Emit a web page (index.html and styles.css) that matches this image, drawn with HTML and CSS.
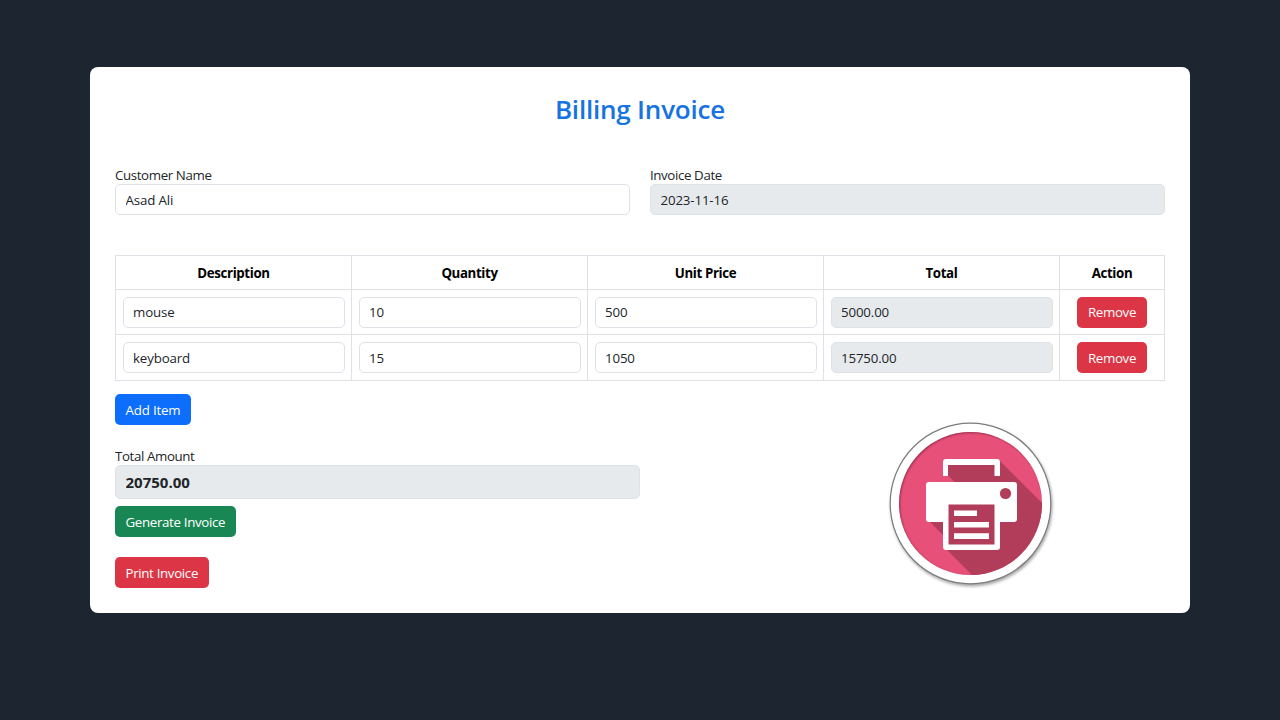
FILE: index.html
```html
<!DOCTYPE html>
<html lang="en">
  <head>
    <meta charset="utf-8" />
    <title>Billing Invoice</title>
    <link rel="stylesheet" href="styles.css">
  </head>

  <body>
    <div class="container">
      <h2>Billing Invoice</h2>

      <div class="details">
        <div class="form-group">
          <label for="customerName">Customer Name</label>
          <input type="text" class="form-control" id="customerName" value="Asad Ali">
        </div>
        <div class="form-group">
          <label for="invoiceDate">Invoice Date</label>
          <input type="text" class="form-control" id="invoiceDate" value="2023-11-16" readonly>
        </div>
      </div>

      <table class="table">
        <thead>
          <tr>
            <th>Description</th>
            <th>Quantity</th>
            <th>Unit Price</th>
            <th>Total</th>
            <th class="action">Action</th>
          </tr>
        </thead>
        <tbody>
          <tr>
            <td><input type="text" class="form-control" value="mouse"></td>
            <td><input type="text" class="form-control" value="10"></td>
            <td><input type="text" class="form-control" value="500"></td>
            <td><input type="text" class="form-control" value="5000.00" readonly></td>
            <td><button type="button" class="btn btn-danger">Remove</button></td>
          </tr>
          <tr>
            <td><input type="text" class="form-control" value="keyboard"></td>
            <td><input type="text" class="form-control" value="15"></td>
            <td><input type="text" class="form-control" value="1050"></td>
            <td><input type="text" class="form-control" value="15750.00" readonly></td>
            <td><button type="button" class="btn btn-danger">Remove</button></td>
          </tr>
        </tbody>
      </table>

      <div class="footer">
        <div class="summary">
          <button type="button" class="btn btn-primary">Add Item</button>
          <div class="form-group total">
            <label for="totalAmount">Total Amount</label>
            <input type="text" class="form-control" id="totalAmount" value="20750.00" readonly>
          </div>
          <button type="button" class="btn btn-success">Generate Invoice</button>
          <button type="button" class="btn btn-danger print">Print Invoice</button>
        </div>

        <svg class="printer" width="170" height="170" viewBox="5 4 170 170">
          <defs>
            <clipPath id="disc"><circle cx="90.5" cy="88.5" r="71.5" /></clipPath>
          </defs>
          <circle class="ring" cx="90.5" cy="88.5" r="80.3" />
          <circle cx="90.5" cy="88.5" r="71.5" fill="#e75078" />
          <g clip-path="url(#disc)">
            <path d="M119 45 L180 106 V180 H112 L63 131 V120 L49 106 L68 67 H74.500 L65 57.500 L68 50 Z" fill="#b13d5a" />
            <circle class="inner" cx="91.5" cy="89.5" r="73" />
          </g>
          <path d="M63 61 V47 Q63 44 66 44 H117 Q120 44 120 47 V61 H114.500 V50 H68 V61 Z" fill="#fff" />
          <path d="M49 67 H134 Q137 67 137 70 V104 Q137 107 134 107 H120 V132 Q120 135 117 135 H66 Q63 135 63 132 V107 H49 Q46 107 46 104 V70 Q46 67 49 67 Z" fill="#fff" />
          <circle cx="125.500" cy="78.500" r="5.600" fill="#b13d5a" />
          <path d="M68.500 89.500 H114.500 V129.500 H68.500 Z" fill="#b13d5a" />
          <path d="M74 95.500 H97 V101 H74 Z M74 107 H109 V112.500 H74 Z M74 118.300 H109 V124 H74 Z" fill="#fff" />
        </svg>
      </div>
    </div>
  </body>
</html>
```

FILE: styles.css
```css
* {
  box-sizing: border-box;
}

body {
  margin: 0;
  min-height: 720px;
  padding: 67px 90px 0;
  background-color: #1d2530;
  color: #212529;
  font-family: "Open Sans", "Noto Sans", sans-serif;
  font-size: 13.3px;
  line-height: 20px;
  letter-spacing: -0.38px;
}

.container {
  height: 546px;
  padding: 25px;
  background-color: #fff;
  border-radius: 8px;
}

h2 {
  margin: 0 0 40px;
  color: #1673e0;
  font-size: 26px;
  font-weight: 600;
  line-height: 34px;
  text-align: center;
  letter-spacing: -0.2px;
}

.details {
  display: grid;
  grid-template-columns: 1fr 1fr;
  gap: 20px;
  margin-bottom: 40px;
}

label {
  display: block;
  height: 18px;
  line-height: 18px;
}

.form-control {
  display: block;
  width: 100%;
  height: 31px;
  padding: 0 9.5px;
  border: 1px solid #dee2e6;
  border-radius: 5px;
  background-color: #fff;
  color: #212529;
  font: inherit;
  letter-spacing: -0.15px;
}

.form-control[readonly] {
  background-color: #e7eaed;
}

.table {
  width: 1050px;
  margin-bottom: 13px;
  border-collapse: collapse;
  table-layout: fixed;
}

.table th,
.table td {
  padding: 6.5px;
  border: 1px solid #dee2e6;
  text-align: center;
}

.table th {
  height: 34px;
  color: #000;
  font-weight: 700;
}

.table td {
  height: 45px;
}

.table tr:last-child td {
  height: 46px;
}

.table .action {
  width: 105px;
}

.btn {
  display: block;
  height: 31px;
  padding: 0 10.5px;
  border: 0;
  border-radius: 5px;
  color: #fff;
  font: inherit;
  letter-spacing: -0.33px;
}

.table .btn {
  margin: 0 auto;
}

.btn-primary {
  background-color: #0d6efd;
  letter-spacing: -0.18px;
}

.btn-success {
  background-color: #198754;
}

.btn-danger {
  background-color: #dc3545;
}

.footer {
  display: flex;
}

.summary {
  width: 525px;
}

.total {
  margin: 22px 0 7px;
}

.total .form-control {
  height: 34px;
  font-size: 15px;
  font-weight: 700;
  letter-spacing: 0;
}

.print {
  margin-top: 20px;
}

.printer {
  margin: 25px 0 0 245px;
}

.ring {
  fill: #fff;
  stroke: #7c7c7c;
  stroke-width: 1.2;
  filter: drop-shadow(1px 2px 1.5px rgba(0, 0, 0, 0.35));
}

/* shading along the upper left edge of the disc */
.inner {
  fill: none;
  stroke: rgba(70, 10, 30, 0.6);
  stroke-width: 2.5;
  filter: blur(1px);
}
```
